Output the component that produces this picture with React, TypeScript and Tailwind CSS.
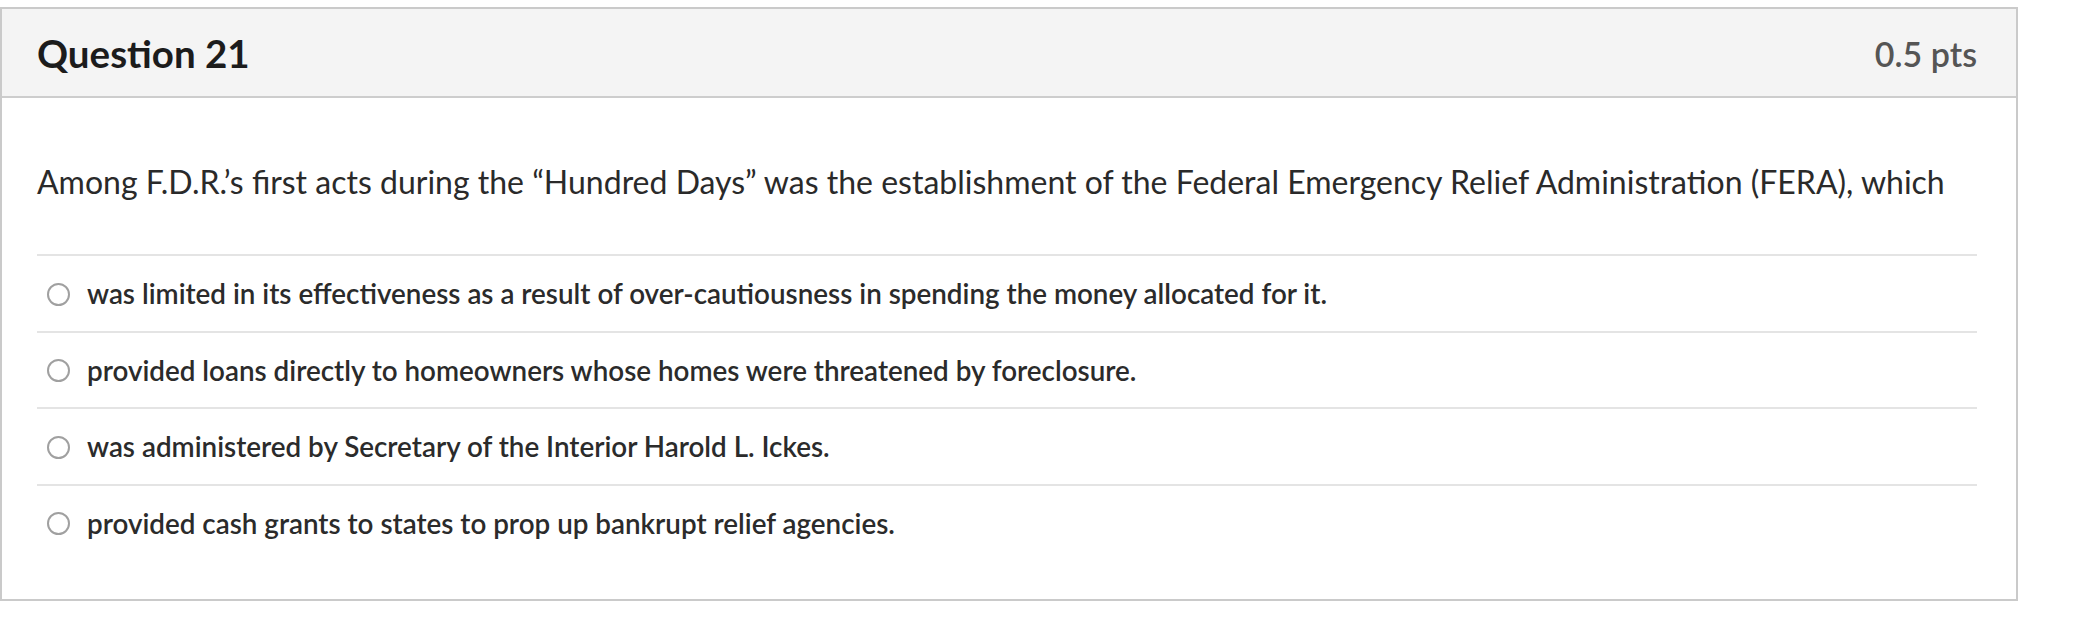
import React from "react";

const answers = [
  "was limited in its effectiveness as a result of over-cautiousness in spending the money allocated for it.",
  "provided loans directly to homeowners whose homes were threatened by foreclosure.",
  "was administered by Secretary of the Interior Harold L. Ickes.",
  "provided cash grants to states to prop up bankrupt relief agencies.",
];

export default function App() {
  return (
    <div
      className="w-[2096px] h-[630px] bg-white overflow-hidden"
      style={{ fontFamily: "Lato, 'Open Sans', sans-serif" }}
    >
      <div className="mt-[7px] w-[2018px] h-[594px] border-2 border-[#cacaca] flex flex-col">
        <div className="h-[89px] bg-[#f4f4f4] border-b-2 border-[#cdcdcd] pl-[35px] pr-[39px] pt-[2px] flex items-center justify-between">
          <div className="text-[38.5px] font-bold text-[#1c1c1c] leading-none">Question 21</div>
          <div className="text-[34px] font-semibold text-[#555555] leading-none">0.5 pts</div>
        </div>
        <div className="pl-[35px] pr-[39px] pt-[61px] flex flex-col">
          <div className="text-[32px] text-[#2a2a2a] leading-[45px] mb-[50px]">
            Among F.D.R.’s first acts during the “Hundred Days” was the establishment of the Federal Emergency Relief Administration (FERA), which
          </div>
          {answers.map((a) => (
            <div
              key={a}
              className="h-[76.5px] border-t-2 border-[#e4e4e4] flex items-center pt-[2px]"
            >
              <div className="ml-[10px] w-[23px] h-[23px] rounded-full border-2 border-[#a0a0a0] bg-white shrink-0" />
              <div className="ml-[17px] text-[27.8px] font-semibold text-[#2b2b2b] leading-none">{a}</div>
            </div>
          ))}
        </div>
      </div>
    </div>
  );
}
